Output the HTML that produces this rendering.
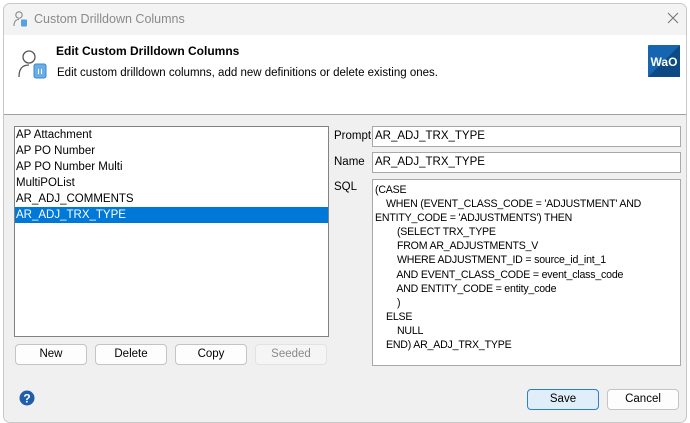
<!DOCTYPE html>
<html><head><style>
*{box-sizing:border-box;margin:0;padding:0}
body{width:690px;height:420px;background:#fff;font-family:"Liberation Sans",sans-serif;font-size:11.5px;color:#000;position:relative;overflow:hidden}
.win{position:absolute;left:3px;top:3px;width:684px;height:420px;border:1px solid #c8c8c8;border-radius:7px;background:#f0f0f0;overflow:hidden}
.title{position:absolute;left:0;top:0;width:100%;height:31px;background:#f3f3f3;color:#8a8a8a;font-size:12.5px}
.hdr{position:absolute;left:0;top:31px;width:100%;height:80px;background:#fff;border-bottom:1px solid #a0a0a0}
.abs{position:absolute}
.list{position:absolute;left:10px;top:122px;width:315px;height:211px;background:#fff;border:1px solid #828282}
.list div{height:16px;line-height:16px;padding-left:1px;white-space:nowrap}
.sel{background:#0078d7;color:#fff}
.btn{position:absolute;height:21px;border:1px solid #c4c4c4;border-radius:4px;background:#fdfdfd;text-align:center;line-height:19px;font-size:11.5px}
.inp{position:absolute;left:368px;width:309px;height:21px;border:1px solid #a8a8a8;background:#fff;padding-left:2px;line-height:19px}
.sql{position:absolute;left:368px;top:175px;width:309px;height:187px;border:1px solid #a8a8a8;background:#fff;padding:3px 2px;font-size:10.6px;letter-spacing:-0.2px;line-height:14.1px;white-space:pre}
.lbl{position:absolute;left:330px}
</style></head><body>
<div class="win">
 <div class="title">
  <svg class="abs" style="left:8px;top:6px" width="18" height="18" viewBox="0 0 18 18"><circle cx="7" cy="5" r="3.2" fill="none" stroke="#888" stroke-width="1.1"/><path d="M2 16 C2 11 4 9.5 7 9.5" fill="none" stroke="#888" stroke-width="1.1"/><rect x="9" y="9.5" width="6" height="7" rx="1" fill="#5aa0e0"/></svg>
  <span class="abs" style="left:30px;top:8px">Custom Drilldown Columns</span>
  <svg class="abs" style="left:663px;top:8px" width="12" height="12"><path d="M1 1L11 11M11 1L1 11" stroke="#777" stroke-width="1.1"/></svg>
 </div>
 <div class="hdr">
  <svg class="abs" style="left:12px;top:12px" width="34" height="34" viewBox="0 0 34 34"><circle cx="13" cy="10" r="6" fill="none" stroke="#555" stroke-width="1.3"/><path d="M3 30 C3 22 6 18 13 18" fill="none" stroke="#555" stroke-width="1.3"/><rect x="18" y="17" width="12" height="14" rx="2" fill="#6aaee6" stroke="#3a86d0"/><path d="M22.5 22v5M25.5 22v5" stroke="#fff" stroke-width="1"/></svg>
  <div class="abs" style="left:52px;top:9px;font-weight:bold;font-size:12px">Edit Custom Drilldown Columns</div>
  <div class="abs" style="left:53px;top:32px;font-size:11.5px">Edit custom drilldown columns, add new definitions or delete existing ones.</div>
  <svg class="abs" style="left:644px;top:10px" width="32" height="32"><rect width="32" height="32" rx="1" fill="#1565b0"/><path d="M32 0V32H0Z" fill="#0d4a85"/><text x="16" y="21" text-anchor="middle" font-family="Liberation Sans" font-weight="bold" font-size="12" fill="#fff">WaO</text></svg>
 </div>
 <div class="list">
  <div>AP Attachment</div><div>AP PO Number</div><div>AP PO Number Multi</div><div>MultiPOList</div><div>AR_ADJ_COMMENTS</div><div class="sel">AR_ADJ_TRX_TYPE</div>
 </div>
 <div class="btn" style="left:11px;top:340px;width:72px">New</div>
 <div class="btn" style="left:91px;top:340px;width:72px">Delete</div>
 <div class="btn" style="left:171px;top:340px;width:72px">Copy</div>
 <div class="btn" style="left:251px;top:340px;width:72px;color:#8a8a8a;background:#f5f5f5;border-color:#e2e2e2">Seeded</div>
 <div class="lbl" style="top:126px">Prompt</div>
 <div class="inp" style="top:122px">AR_ADJ_TRX_TYPE</div>
 <div class="lbl" style="top:152px">Name</div>
 <div class="inp" style="top:148px">AR_ADJ_TRX_TYPE</div>
 <div class="lbl" style="top:177px">SQL</div>
 <div class="sql">(CASE
    WHEN (EVENT_CLASS_CODE = 'ADJUSTMENT' AND
ENTITY_CODE = 'ADJUSTMENTS') THEN
        (SELECT TRX_TYPE
        FROM AR_ADJUSTMENTS_V
        WHERE ADJUSTMENT_ID = source_id_int_1
        AND EVENT_CLASS_CODE = event_class_code
        AND ENTITY_CODE = entity_code
        )
    ELSE
        NULL
    END) AR_ADJ_TRX_TYPE</div>
 <svg class="abs" style="left:15px;top:386px" width="16" height="16"><circle cx="8" cy="8" r="7.5" fill="#1f5ea8"/><text x="8" y="12.5" text-anchor="middle" font-family="Liberation Sans" font-weight="bold" font-size="12" fill="#fff">?</text></svg>
 <div class="btn" style="left:523px;top:385px;width:72px;background:#e0eef9;border-color:#2b7fd0">Save</div>
 <div class="btn" style="left:603px;top:385px;width:72px">Cancel</div>
</div>
</body></html>
